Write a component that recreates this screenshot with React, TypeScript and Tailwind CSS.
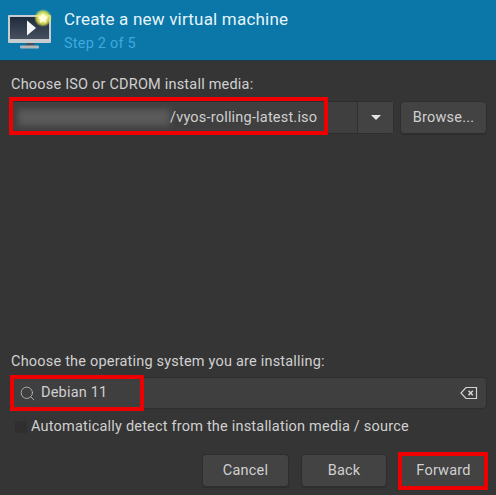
import React from 'react';
import { Search } from 'lucide-react';

const VmIcon = () => (
  <svg width="46" height="42" viewBox="0 0 46 42">
    <defs>
      <radialGradient id="glow">
        <stop offset="0.3" stopColor="#fdfdb0" />
        <stop offset="0.7" stopColor="#e8e84a" stopOpacity="0.8" />
        <stop offset="1" stopColor="#e8e84a" stopOpacity="0" />
      </radialGradient>
      <linearGradient id="screen" x1="0" y1="0" x2="0" y2="1">
        <stop offset="0" stopColor="#1f2a3c" />
        <stop offset="1" stopColor="#46505f" />
      </linearGradient>
    </defs>
    <rect x="0" y="6" width="43" height="28" rx="1" fill="#c9ccce" />
    <rect x="2" y="8" width="39" height="22" fill="url(#screen)" />
    <path d="M19 11.5 L28 19 L19 26.5 Z" fill="#f4f5f5" />
    <rect x="18" y="34" width="8" height="3" fill="#43525c" />
    <rect x="12" y="36.5" width="19" height="3" rx="1" fill="#b3b6b8" />
    <circle cx="35" cy="9" r="9" fill="url(#glow)" />
    <path d="M35 4 L36.5 7.5 L40 8 L37.4 10.4 L38.2 14 L35 12 L31.8 14 L32.6 10.4 L30 8 L33.5 7.5 Z" fill="#fdfde0" />
  </svg>
);

const Button = ({ label, width }: { label: string; width: string }) => (
  <button className={`${width} h-[33px] rounded-[4px] border border-[#2e2e2e] bg-[#434343] text-[14.5px] text-[#d0d0d0] shadow-[0_1px_1px_rgba(0,0,0,0.15)]`}>
    {label}
  </button>
);

export default function App() {
  return (
    <div className="relative flex h-[495px] w-[496px] flex-col overflow-hidden bg-[#353535] font-['Roboto',sans-serif] text-[14.5px] tracking-[0.2px] text-[#d0d0d0]">
      <header className="flex h-[61px] shrink-0 items-center gap-[20px] border-b border-[#1f3a48] bg-[#0a77a8] pl-[8px] pt-[1px]">
        <div className="mb-[2px] w-[46px] pt-[1px]"><VmIcon /></div>
        <div className="-ml-[10px] flex flex-col pt-[1px]">
          <span className="text-[17px] leading-[24px] text-[#e6f4fa]">Create a new virtual machine</span>
          <span className="mt-[1px] text-[14.5px] leading-[24px] text-[#3fa9df]">Step 2 of 5</span>
        </div>
      </header>

      <main className="flex flex-1 flex-col pb-[8px] pl-[11px] pr-[9px]">
        <label className="mt-[15px] leading-[18px]">Choose ISO or CDROM install media:</label>
        <div className="mt-[7px] flex h-[33px] gap-[6px]">
          <div className="flex flex-1 rounded-[4px] border border-[#2e2e2e] bg-[#3f3f3f]">
            <div className="relative flex flex-1 items-center pl-[158px]">
              <div className="absolute left-[6px] top-[7px] h-[17px] w-[152px] bg-[#5a5a5a] blur-[3px]" />
              <span className="relative">/vyos-rolling-latest.iso</span>
            </div>
            <div className="flex w-[36px] items-center justify-center border-l border-[#2e2e2e] bg-[#434343]">
              <div className="h-0 w-0 border-x-[5px] border-t-[5px] border-x-transparent border-t-[#e4e4e4]" />
            </div>
          </div>
          <Button label="Browse..." width="w-[87px]" />
        </div>

        <label className="mt-auto leading-[18px]">Choose the operating system you are installing:</label>
        <div className="mt-[6px] flex h-[32px] items-center rounded-[4px] border border-[#2e2e2e] bg-[#3f3f3f] pl-[7px] pr-[8px]">
          <Search size={17} strokeWidth={1.1} className="text-[#c4c4c4]" />
          <span className="ml-[5px] flex-1">Debian 11</span>
          <svg width="18" height="14" viewBox="0 0 18 14" fill="none" stroke="#d4d4d4" strokeWidth="1.2">
            <path d="M6 1.5 H16.5 V12.5 H6 L1 7 Z" />
            <path d="M8.5 4.8 L12.8 9.2 M12.8 4.8 L8.5 9.2" strokeWidth="1.6" />
          </svg>
        </div>
        <div className="mt-[9px] flex items-center gap-[3px] leading-[18px]">
          <div className="ml-[3px] h-[14px] w-[14px] rounded-[2px] border border-[#353535] bg-[#2f2f2f]" />
          <span>Automatically detect from the installation media / source</span>
        </div>
        <div className="mt-[18px] flex justify-end">
          <Button label="Cancel" width="w-[87px]" />
          <Button label="Back" width="ml-[12px] w-[86px]" />
          <Button label="Forward" width="ml-[13px] w-[87px]" />
        </div>
      </main>

      <div className="absolute left-[9px] top-[97px] h-[38px] w-[319px] border-[4px] border-[#ee0000]" />
      <div className="absolute left-[10px] top-[375px] h-[36px] w-[134px] border-[4px] border-[#ee0000]" />
      <div className="absolute left-[398px] top-[452px] h-[38px] w-[90px] border-[4px] border-[#ee0000]" />
    </div>
  );
}
